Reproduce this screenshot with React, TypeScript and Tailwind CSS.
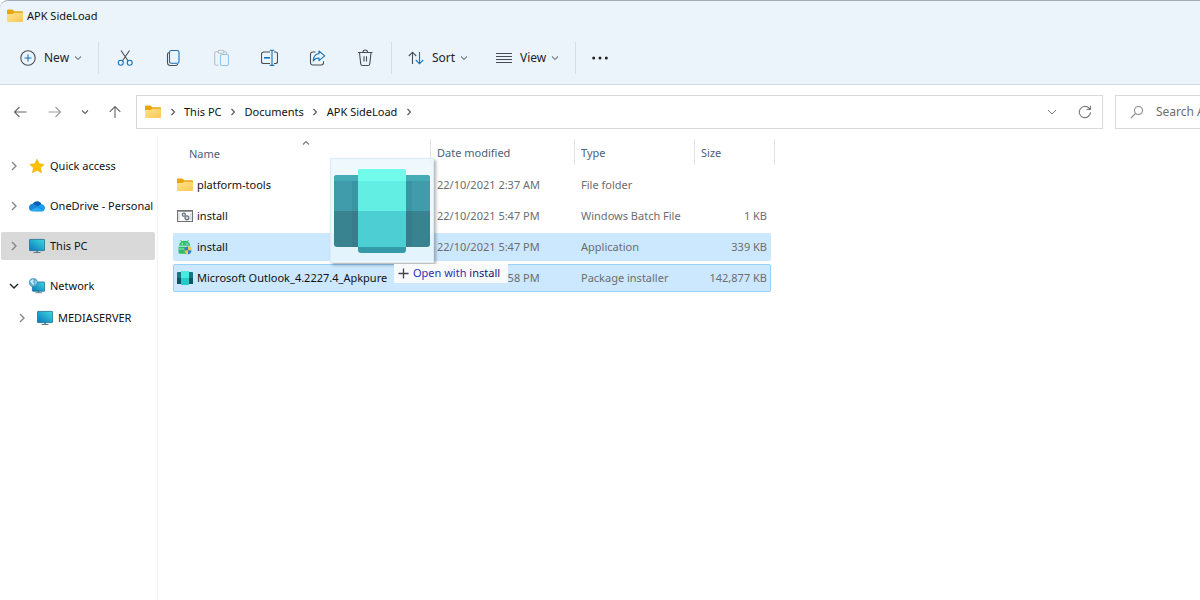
import React, { useState } from 'react';

type IconProps = { className?: string };

interface FileRow {
  name: string;
  icon: React.ReactNode;
  modified: string;
  type: string;
  size: string;
  state: 'normal' | 'target' | 'selected';
}

const Chevron: React.FC<IconProps> = ({ className = '' }) => (
  <svg viewBox="0 0 8 8" className={`h-2 w-2 shrink-0 ${className}`} fill="none" stroke="currentColor" strokeWidth="1.1">
    <path d="M1 2.5 4 5.5 7 2.5" />
  </svg>
);

const FolderIcon: React.FC<IconProps> = ({ className = '' }) => (
  <svg viewBox="0 0 16 14" className={`h-3.5 w-4 shrink-0 ${className}`}>
    <defs>
      <linearGradient id="folder" x1="0" y1="0" x2="1" y2="1">
        <stop offset="0" stopColor="#ffe391" />
        <stop offset="1" stopColor="#f9c952" />
      </linearGradient>
    </defs>
    <path d="M0 1.8C0 .9.5.5 1.3.5h4L7.2 2.300h7.500c.8 0 1.300.5 1.300 1.200V9H0z" fill="#e8a50c" />
    <path d="M0 5h5.500l1.700-1.300h7.600c.8 0 1.200.4 1.200 1.100v6.900c0 .8-.5 1.300-1.200 1.300H1.200C.5 13 0 12.500 0 11.700z" fill="url(#folder)" />
  </svg>
);

const MonitorIcon: React.FC = () => (
  <svg viewBox="0 0 16 16" className="h-4 w-4 shrink-0">
    <defs>
      <linearGradient id="screen" x1="1" y1="0" x2="0" y2="1">
        <stop offset="0" stopColor="#3bdcdd" />
        <stop offset="1" stopColor="#0a75bd" />
      </linearGradient>
    </defs>
    <path d="M7 12h2v2H7z" fill="#6f9db1" />
    <path d="M4.500 14h7v1h-7z" fill="#5e7884" />
    <rect x=".4" y="1.400" width="15.200" height="11.200" rx=".6" fill="url(#screen)" stroke="#1d6d92" strokeWidth=".8" />
  </svg>
);

const NetworkIcon: React.FC = () => (
  <svg viewBox="0 0 16 16" className="h-4 w-4 shrink-0">
    <path d="M8.500 13h2v1.500h-2z" fill="#6f9db1" />
    <path d="M6.500 14.300h6.500v.9H6.500z" fill="#5e7884" />
    <rect x="3.400" y="4" width="12.200" height="9.200" rx=".5" fill="url(#screen)" stroke="#1d6d92" strokeWidth=".8" />
    <circle cx="4.300" cy="4.600" r="4.100" fill="#5baed8" stroke="#39799e" strokeWidth=".5" />
    <path d="M1 3.300 3.300 1.200 5 2.300 3.700 4 5.200 5.300 4.100 7.200 2.700 5.200z" fill="#c3ecf8" />
    <path d="M6.300 2.200 8 4.400 6.700 6z" fill="#c3ecf8" />
  </svg>
);

const CloudIcon: React.FC = () => (
  <svg viewBox="0 0 16 16" className="h-4 w-4 shrink-0">
    <path d="M4.200 5.200A4.800 4.800 0 0 1 12.800 7L8 10.500 1.500 8.300A4 4 0 0 1 4.200 5.200z" fill="#0a5fb4" />
    <path d="M12 6.300c2.400 0 4 1.600 4 3.600S14.500 13.300 12.700 13.300H7L8.500 8.500z" fill="#1ba0ec" />
    <path d="M3.800 6c1.100 0 2.100.3 3 .9l7.700 4.800c-.5 1-1.200 1.600-2.400 1.600H3.600A3.600 3.600 0 0 1 3.800 6z" fill="#1686d9" />
    <path d="M1 12 8.300 9.100l6.200 3.300c-.5.600-1.200.9-2.200.9H3.600c-1 0-1.900-.5-2.600-1.300z" fill="#27a8f0" />
  </svg>
);

const StarIcon: React.FC = () => (
  <svg viewBox="0 0 16 16" className="h-4 w-4 shrink-0">
    <path d="M8 1.200 10.200 5.800 15.200 6.400 11.500 9.800 12.500 14.800 8 12.300 3.500 14.800 4.500 9.800.8 6.400 5.800 5.800z" fill="#fdc100" stroke="#edab13" strokeWidth=".6" strokeLinejoin="round" />
  </svg>
);

const BatchIcon: React.FC = () => (
  <svg viewBox="0 0 16 16" className="h-4 w-4 shrink-0" fill="none">
    <rect x=".5" y="2.500" width="15" height="11" fill="#fafafa" stroke="#737373" />
    <path d="M1 3.500h14" stroke="#9a9a9a" />
    <path d="M2 12V5M14 12V5" stroke="#c8c8c8" />
    <circle cx="6.800" cy="6.700" r="1.600" fill="#d7dce2" stroke="#68717b" strokeWidth="1.100" />
    <circle cx="9.900" cy="9.800" r="2" fill="#d7dce2" stroke="#68717b" strokeWidth="1.200" />
  </svg>
);

const AndroidIcon: React.FC = () => (
  <svg viewBox="0 0 16 16" className="h-4 w-4 shrink-0">
    <path d="M3.500 1 5 3M11.500 1 10 3" stroke="#33c46b" strokeWidth="1" />
    <path d="M2 6.800a5.600 5 0 0 1 11.200 0z" fill="#33c46b" />
    <circle cx="5.200" cy="4.900" r=".6" fill="#fff" />
    <circle cx="9.900" cy="4.900" r=".6" fill="#fff" />
    <path d="M1.500 7.800h12v5.500a1.500 1.500 0 0 1-1.500 1.500H3a1.500 1.500 0 0 1-1.500-1.500z" fill="#2fbd67" />
    <path d="M2 10h6" stroke="#b7efca" strokeWidth=".8" />
    <path d="M7.500 8.700 11 7.500v4H7.500z" fill="#2f7cd0" />
    <path d="M11 7.500l3.500 1.200v2.800H11z" fill="#f6c945" />
    <path d="M7.500 11.500H11v4c-2-.8-3.400-2.100-3.500-4z" fill="#f6c945" />
    <path d="M11 11.500h3.500c-.1 1.900-1.500 3.200-3.500 4z" fill="#2f7cd0" />
  </svg>
);

const PackageIcon: React.FC = () => (
  <svg viewBox="0 0 16 16" className="h-4 w-4 shrink-0">
    <rect x="0" y="2" width="16" height="12" rx=".7" fill="#137884" />
    <path d="M0 8h16v5.300a.7.7 0 0 1-.7.7H.7a.7.700 0 0 1-.7-.7z" fill="#0b5663" />
    <rect x="4" y="1" width="8" height="14" rx=".7" fill="#28c9c8" />
    <path d="M4 1.700a.7.700 0 0 1 .7-.7h6.600a.7.700 0 0 1 .7.7V8H4z" fill="#4ee9dd" />
  </svg>
);

const PackageArt: React.FC = () => (
  <svg viewBox="0 0 96 84" className="h-[84px] w-24">
    <defs>
      <clipPath id="sides">
        <rect y="6" width="96" height="72" rx="3" />
      </clipPath>
      <clipPath id="front">
        <rect x="24" width="48" height="84" rx="3" />
      </clipPath>
    </defs>
    <g clipPath="url(#sides)">
      <path d="M0 6h96v36H0z" fill="#409caa" />
      <path d="M0 6h96v6H0z" fill="#45abb5" />
      <path d="M0 42h96v36H0z" fill="#398391" />
      <path d="M18 12h6v30h-6zM72 12h6v30h-6z" fill="#3896a4" />
      <path d="M18 42h6v36h-6zM72 42h6v36h-6z" fill="#367c8b" />
    </g>
    <g clipPath="url(#front)">
      <path d="M24 0h48v42H24z" fill="#63eee4" />
      <path d="M24 0h48v12H24z" fill="#70fbeb" />
      <path d="M24 42h48v36H24z" fill="#4dced2" />
      <path d="M24 78h48v6H24z" fill="#359ba8" />
    </g>
  </svg>
);

const line = { fill: 'none', stroke: '#4a4e52', strokeWidth: 1.1 };
const blue = '#1672b8';

const actions = [
  {
    label: 'Cut',
    drawing: (
      <>
        <path d="M4 1.500 11.300 12.200M12.500 1.500 5.200 12.200" />
        <circle cx="3.800" cy="13.800" r="2.500" stroke={blue} />
        <circle cx="12.700" cy="13.800" r="2.500" stroke={blue} />
      </>
    ),
  },
  {
    label: 'Copy',
    drawing: (
      <>
        <path d="M4.500 3.500C3 3.500 2.500 4.300 2.500 5.500v7.700c0 2 1 3.300 3 3.300h5c1.300 0 2-.7 2.200-1.700" />
        <rect x="4.500" y="1.500" width="9.500" height="12.800" rx="1.800" stroke={blue} />
      </>
    ),
  },
  {
    label: 'Paste',
    drawing: (
      <>
        <path d="M5 2.700H3.200A1.500 1.500 0 0 0 1.700 4.200v10.600a1.500 1.500 0 0 0 1.500 1.500h2.300M11 2.700h1.300a1.500 1.500 0 0 1 1.500 1.500v.6" stroke="#b8bfc6" />
        <rect x="5" y="1.200" width="6" height="3" rx="1.400" stroke="#b8bfc6" />
        <rect x="7.500" y="5.500" width="8" height="11" rx="1.500" stroke="#94c2e0" />
      </>
    ),
  },
  {
    label: 'Rename',
    drawing: (
      <>
        <path d="M9 3H2.500a2 2 0 0 0-2 2v7.500a2 2 0 0 0 2 2H9M13 3h1.500a2 2 0 0 1 2 2v7.500a2 2 0 0 1-2 2H13" />
        <path d="M11 1.200v15.200M8.700 1.200h4.600M8.700 16.400h4.600" stroke={blue} />
        <path d="M3 8.800h6" stroke={blue} strokeWidth="1.600" />
      </>
    ),
  },
  {
    label: 'Share',
    drawing: (
      <>
        <path d="M6.500 3H3.700a2.200 2.200 0 0 0-2.200 2.200v8.600A2.200 2.200 0 0 0 3.700 16h8.600a2.200 2.200 0 0 0 2.200-2.200v-1.600" />
        <path d="M10 2 15.700 6.800 10 11.600V9C7 8.900 5.500 10 4.200 12 4.500 8 6.500 5 10 4.800z" stroke={blue} strokeLinejoin="round" />
      </>
    ),
  },
  {
    label: 'Delete',
    drawing: (
      <>
        <path d="M1 3.500h14.500M6 3.300a2.200 2.200 0 0 1 4.500 0M2.500 3.700l1.200 11a1.900 1.900 0 0 0 1.900 1.800h5.300a1.900 1.900 0 0 0 1.900-1.800L14 3.700M7 7.200v5.300M9.500 7.200v5.300" />
      </>
    ),
  },
];

const files: FileRow[] = [
  { name: 'platform-tools', icon: <FolderIcon />, modified: '22/10/2021 2:37 AM', type: 'File folder', size: '', state: 'normal' },
  { name: 'install', icon: <BatchIcon />, modified: '22/10/2021 5:47 PM', type: 'Windows Batch File', size: '1 KB', state: 'normal' },
  { name: 'install', icon: <AndroidIcon />, modified: '22/10/2021 5:47 PM', type: 'Application', size: '339 KB', state: 'target' },
  { name: 'Microsoft Outlook_4.2227.4_Apkpure', icon: <PackageIcon />, modified: '22/10/2021 5:58 PM', type: 'Package installer', size: '142,877 KB', state: 'selected' },
];

const rowStyles = {
  normal: '',
  target: 'bg-[#cce8ff]',
  selected: 'bg-[#cce8ff] outline outline-1 -outline-offset-1 outline-[#99d1ff]',
};

const places = [
  { label: 'Quick access', icon: <StarIcon />, className: 'mb-3 pl-2' },
  { label: 'OneDrive - Personal', icon: <CloudIcon />, className: 'mb-3 pl-2' },
  { label: 'This PC', icon: <MonitorIcon />, className: 'mb-3 pl-2' },
  { label: 'Network', icon: <NetworkIcon />, className: 'mb-1 pl-2', open: true },
  { label: 'MEDIASERVER', icon: <MonitorIcon />, className: 'pl-4' },
];

const Divider: React.FC = () => <div className="h-8 w-px shrink-0 bg-[#d5dde5]" />;

const CommandBar: React.FC = () => (
  <div className="flex h-[54px] items-center border-b border-[#d3dbe2] text-xs text-[#1f2326]">
    <button className="flex h-8 w-[98px] items-center pl-5">
      <svg viewBox="0 0 16 16" className="mr-2 h-4 w-4" {...line}>
        <circle cx="8" cy="8" r="7.200" />
        <path d="M8 4.500v7M4.500 8h7" stroke={blue} />
      </svg>
      New
      <Chevron className="ml-[5px] text-[#7c838a]" />
    </button>
    <Divider />
    <div className="flex px-0.5">
      {actions.map((action) => (
        <button key={action.label} aria-label={action.label} className="flex h-8 w-12 items-center justify-center">
          <svg viewBox="0 0 17 18" className="h-[18px] w-[17px]" {...line}>
            {action.drawing}
          </svg>
        </button>
      ))}
    </div>
    <Divider />
    <button className="flex h-8 w-22 items-center pl-4">
      <svg viewBox="0 0 16 16" className="mr-2 h-4 w-4" {...line}>
        <path d="M4.500 14V2.200M.8 6 4.500 2.200 8.200 6" />
        <path d="M11.500 2v11.800M7.800 10l3.700 3.800L15.200 10" stroke={blue} />
      </svg>
      Sort
      <Chevron className="ml-[5px] text-[#7c838a]" />
    </button>
    <button className="flex h-8 w-[95px] items-center pl-4">
      <svg viewBox="0 0 16 16" className="mr-2 h-4 w-4" {...line} strokeWidth="1">
        <path d="M0 3.500h16M0 6.500h16M0 9.500h16M0 12.500h16" />
      </svg>
      View
      <Chevron className="ml-[5px] text-[#7c838a]" />
    </button>
    <Divider />
    <button aria-label="See more" className="flex h-8 w-12 items-center justify-center">
      <svg viewBox="0 0 16 4" className="h-1 w-4" fill="#1f2326">
        <circle cx="1.700" cy="2" r="1.500" />
        <circle cx="8" cy="2" r="1.500" />
        <circle cx="14.300" cy="2" r="1.500" />
      </svg>
    </button>
  </div>
);

const AddressRow: React.FC = () => {
  const [query, setQuery] = useState('');

  return (
    <div className="flex items-center overflow-hidden pt-2.5 pb-[7px]">
      <button aria-label="Back" className="flex h-8 w-10 items-center justify-center">
        <svg viewBox="0 0 14 14" className="h-3.5 w-3.5" {...line} stroke="#666">
          <path d="M13.500 7H1.500M6.500 2 1.500 7 6.500 12" />
        </svg>
      </button>
      <button aria-label="Forward" className="flex h-8 w-[30px] items-center justify-center">
        <svg viewBox="0 0 14 14" className="h-3.5 w-3.5" {...line} stroke="#9b9b9b">
          <path d="M.5 7h12M7.500 2 12.500 7 7.500 12" />
        </svg>
      </button>
      <button aria-label="Recent locations" className="flex h-8 w-[30px] items-center justify-center text-[#666]">
        <Chevron />
      </button>
      <button aria-label="Up" className="mr-1.5 flex h-8 w-[30px] items-center justify-center">
        <svg viewBox="0 0 14 14" className="h-3.5 w-3.5" {...line} stroke="#666">
          <path d="M7 13V1.500M1.700 6.800 7 1.500 12.300 6.800" />
        </svg>
      </button>

      <nav className="flex h-[34px] flex-1 items-center border border-[#d9d9d9] pl-2">
        <FolderIcon />
        {['This PC', 'Documents', 'APK SideLoad'].map((crumb) => (
          <React.Fragment key={crumb}>
            <span className="flex w-[23px] justify-center text-[#555]">
              <Chevron className="-rotate-90" />
            </span>
            <a href="#" className="whitespace-nowrap">{crumb}</a>
          </React.Fragment>
        ))}
        <span className="flex w-[23px] justify-center text-[#555]">
          <Chevron className="-rotate-90" />
        </span>
        <button aria-label="Previous locations" className="ml-auto flex h-8 w-8 items-center justify-center text-[#777]">
          <svg viewBox="0 0 10 10" className="h-2.5 w-2.5" fill="none" stroke="currentColor">
            <path d="M1 3 5 7 9 3" />
          </svg>
        </button>
        <button aria-label="Refresh" className="flex h-8 w-[34px] items-center justify-center">
          <svg viewBox="0 0 14 14" className="h-3.5 w-3.5" {...line} stroke="#777">
            <path d="M12.500 7.200A5.600 5.600 0 1 1 10.800 3L12.300 4.400M12.400.8v3.700H8.600" />
          </svg>
        </button>
      </nav>

      <label className="ml-3 flex h-[34px] w-[85px] shrink-0 items-center border border-r-0 border-[#d9d9d9] pl-3.5">
        <svg viewBox="0 0 14 14" className="mr-3 h-3.5 w-3.5 shrink-0" {...line} stroke="#888">
          <circle cx="8.500" cy="5.500" r="4" />
          <path d="M5.500 8.500.8 13.200" />
        </svg>
        <input
          aria-label="Search APK SideLoad"
          placeholder="Search APK SideLoad"
          value={query}
          onChange={(e) => setQuery(e.target.value)}
          className="min-w-0 flex-1 text-xs outline-none placeholder:text-[#6d6d6d]"
        />
      </label>
    </div>
  );
};

const Sidebar: React.FC = () => {
  const [current, setCurrent] = useState('This PC');

  return (
    <aside className="w-[158px] shrink-0 border-r border-[#f3f3f3] pt-4 pr-0.5 pl-px">
      {places.map((place) => (
        <button
          key={place.label}
          onClick={() => setCurrent(place.label)}
          className={`flex h-7 w-full items-center rounded-xs whitespace-nowrap ${place.className} ${current === place.label ? 'bg-[#d9d9d9]' : ''}`}
        >
          <svg viewBox="0 0 10 10" className={`mr-2.5 h-2.5 w-2.5 shrink-0 ${place.open ? 'rotate-90 text-[#222]' : 'text-[#868686]'}`} fill="none" stroke="currentColor" strokeWidth="1.400">
            <path d="M3 1 7 5 3 9" />
          </svg>
          {place.icon}
          <span className="ml-[5px]">{place.label}</span>
        </button>
      ))}
    </aside>
  );
};

const FileTable: React.FC = () => (
  <table className="w-[602px] table-fixed border-separate border-spacing-x-0 border-spacing-y-[3px] whitespace-nowrap">
    <thead className="text-[#4c607a]">
      <tr className="h-[29px] text-left leading-7">
        <th className="relative w-[257px] p-0 pl-4 font-normal">
          Name
          <Chevron className="absolute top-0 right-[120px] rotate-180 text-[#777]" />
        </th>
        <th className="w-36 p-0 font-normal">
          <div className="mb-[3px] h-[26px] border-l border-[#e2e2e2] pl-1.5">Date modified</div>
        </th>
        <th className="w-30 p-0 font-normal">
          <div className="mb-[3px] h-[26px] border-l border-[#e2e2e2] pl-1.5">Type</div>
        </th>
        <th className="p-0 font-normal">
          <div className="mb-[3px] h-[26px] border-x border-[#e2e2e2] pl-1.5">Size</div>
        </th>
      </tr>
    </thead>
    <tbody className="text-[#6d6d6d]">
      {files.map((file) => (
        <tr key={file.modified + file.type} className="h-7">
          <td colSpan={4} className="p-0">
            <div className={`mr-1 flex h-7 items-center rounded-xs ${rowStyles[file.state]}`}>
              <span className="flex w-[264px] items-center gap-1 pl-1 text-[#111]">
                {file.icon}
                {file.name}
              </span>
              <span className="w-36">{file.modified}</span>
              <span className="w-30">{file.type}</span>
              <span className="flex-1 pr-1 text-right">{file.size}</span>
            </div>
          </td>
        </tr>
      ))}
    </tbody>
  </table>
);

const App: React.FC = () => {
  return (
    <div className="flex min-h-screen flex-col bg-white font-['Noto_Sans','Open_Sans',sans-serif] text-[11px] text-[#111]">
      {/* Title and commands */}
      <header className="rounded-tl-lg border-t border-[#a3adb8] bg-[#ebf4fb]">
        <div className="flex h-[30px] items-center gap-1 pl-[7px]">
          <FolderIcon />
          <h1>APK SideLoad</h1>
        </div>
        <CommandBar />
      </header>

      <AddressRow />

      {/* Folder content */}
      <div className="flex flex-1">
        <Sidebar />
        <main className="relative min-w-0 flex-1 pl-[15px]">
          <FileTable />

          {/* Item being dragged, with its drop hint */}
          <div className="absolute top-[22px] left-[172px] flex h-[105px] w-[104px] items-center justify-center border border-[#d9ebf5] bg-[#eaf6fd]/80 shadow-[2px_2px_3px_rgba(0,0,0,0.3)]">
            <PackageArt />
          </div>
          <div className="absolute top-32 left-[236px] flex h-[19px] items-center bg-[#f8fafc] pr-2 pl-1 whitespace-nowrap text-[#1f35b5]">
            <svg viewBox="0 0 11 11" className="mr-1 h-[11px] w-[11px]" stroke="#444" strokeWidth="1.300">
              <path d="M5.500.5v10M.5 5.500h10" />
            </svg>
            <span>
              Open with <span className="text-[#14126b]">install</span>
            </span>
          </div>
        </main>
      </div>
    </div>
  );
};

export default App;
